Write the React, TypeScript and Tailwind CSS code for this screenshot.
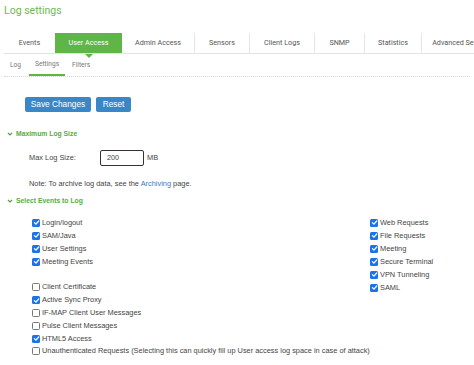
import React from "react";

const Check = ({ on }: { on: boolean }) =>
  on ? (
    <span className="inline-flex h-[8px] w-[8px] shrink-0 items-center justify-center rounded-[1.5px] bg-[#1a73e8]">
      <svg viewBox="0 0 10 10" className="h-[7px] w-[7px]">
        <path d="M2 5.2 L4.2 7.3 L8.2 2.8" fill="none" stroke="#fff" strokeWidth="1.8" strokeLinecap="round" strokeLinejoin="round" />
      </svg>
    </span>
  ) : (
    <span className="inline-block h-[8px] w-[8px] shrink-0 rounded-[1.5px] border border-[#767676] bg-white" />
  );

const Row = ({ on, label, h = "h-[13px]" }: { on: boolean; label: string; h?: string }) => (
  <div className={`flex items-center gap-[2px] whitespace-nowrap ${h}`}>
    <Check on={on} />
    <span className="leading-[10px]">{label}</span>
  </div>
);

const Chevron = () => (
  <svg viewBox="0 0 10 10" className="h-[6px] w-[6px]">
    <path d="M1.5 3 L5 6.5 L8.5 3" fill="none" stroke="#4f9e3a" strokeWidth="2" />
  </svg>
);

const tabs: { label: string; w: string; active?: boolean }[] = [
  { label: "Events", w: "w-[51px]" },
  { label: "User Access", w: "w-[67px]", active: true },
  { label: "Admin Access", w: "w-[73px]" },
  { label: "Sensors", w: "w-[55px]" },
  { label: "Client Logs", w: "w-[65px]" },
  { label: "SNMP", w: "w-[50px]" },
  { label: "Statistics", w: "w-[57px]" },
  { label: "Advanced Settings", w: "w-[80px]" },
];

export default function App() {
  return (
    <div className="h-[365px] w-[474px] overflow-hidden bg-white text-[7.4px] text-[#444]" style={{ fontFamily: '"Liberation Sans", Arial, sans-serif' }}>
      <div className="h-[33px] pl-[4px] pt-[4px] text-[10.5px] leading-[14px] text-[#6dba4f]" style={{ fontFamily: "Roboto, sans-serif" }}>
        Log settings
      </div>
      <div className="ml-[4px] flex h-[21px] border-b border-[#e3e3e3] whitespace-nowrap" style={{ fontFamily: "Roboto, sans-serif" }}>
        {tabs.map((t, i) => (
          <div
            key={t.label}
            className={`relative flex shrink-0 items-center justify-center text-[7.2px] ${t.w} ${
              t.active ? "bg-[#5fb548] text-white" : "text-[#555]"
            } ${i > 1 && i < tabs.length - 1 ? "border-r border-[#e6e6e6]" : ""}`}
          >
            {t.label}
            {t.active && (
              <span className="absolute bottom-[-5px] left-1/2 h-0 w-0 -translate-x-1/2 border-x-[4px] border-t-[4px] border-x-transparent border-t-[#5fb548]" />
            )}
          </div>
        ))}
      </div>
      <div className="ml-[4px] mr-[4px] flex h-[23px] items-end border-b border-dotted border-[#d6d6d6] text-[6.6px] text-[#777]" style={{ fontFamily: "Roboto, sans-serif" }}>
        <div className="flex h-[20px] items-center pl-[6px] pr-[8px]">Log</div>
        <div className="flex h-[20px] items-center border-b-2 border-[#5fb548] px-[6px]">Settings</div>
        <div className="flex h-[20px] items-center px-[7px]">Filters</div>
      </div>
      <div className="mt-[20px] flex gap-[5px] pl-[25px]">
        <button className="h-[15px] w-[66px] rounded-[2px] bg-[#3a87c8] text-[8.3px] leading-[15px] text-white">Save Changes</button>
        <button className="h-[15px] w-[35px] rounded-[2px] bg-[#3a87c8] text-[8.3px] leading-[15px] text-white">Reset</button>
      </div>
      <div className="mt-[17px] flex h-[10px] items-center gap-[3px] pl-[7px] text-[6.8px] font-bold text-[#5aab42]">
        <Chevron />
        <span>Maximum Log Size</span>
      </div>
      <div className="mt-[11px] flex h-[16px] items-center pl-[29px]">
        <span className="w-[71px]">Max Log Size:</span>
        <div className="flex h-[16px] w-[44px] items-center rounded-[2px] border-[1.5px] border-[#333] pl-[6px] text-[7.2px]">200</div>
        <span className="ml-[3px]">MB</span>
      </div>
      <div className="mt-[13px] h-[10px] pl-[29px] leading-[10px]">
        Note: To archive log data, see the <span className="text-[#3a7bbf]">Archiving</span> page.
      </div>
      <div className="mt-[7px] flex h-[10px] items-center gap-[3px] pl-[7px] text-[6.8px] font-bold text-[#5aab42]">
        <Chevron />
        <span>Select Events to Log</span>
      </div>
      <div className="mt-[10px] flex">
        <div className="w-[370px] shrink-0 pl-[32px]">
          <Row on label="Login/logout" />
          <Row on label="SAM/Java" />
          <Row on label="User Settings" />
          <Row on label="Meeting Events" />
          <div className="h-[13px]" />
          <Row on={false} label="Client Certificate" h="h-[12.8px]" />
          <Row on label="Active Sync Proxy" h="h-[12.8px]" />
          <Row on={false} label="IF-MAP Client User Messages" h="h-[12.8px]" />
          <Row on={false} label="Pulse Client Messages" h="h-[12.8px]" />
          <Row on label="HTML5 Access" h="h-[12.8px]" />
          <Row on={false} label="Unauthenticated Requests (Selecting this can quickly fill up User access log space in case of attack)" h="h-[12.8px]" />
        </div>
        <div className="shrink-0">
          <Row on label="Web Requests" />
          <Row on label="File Requests" />
          <Row on label="Meeting" />
          <Row on label="Secure Terminal" />
          <Row on label="VPN Tunneling" />
          <Row on label="SAML" />
        </div>
      </div>
    </div>
  );
}
